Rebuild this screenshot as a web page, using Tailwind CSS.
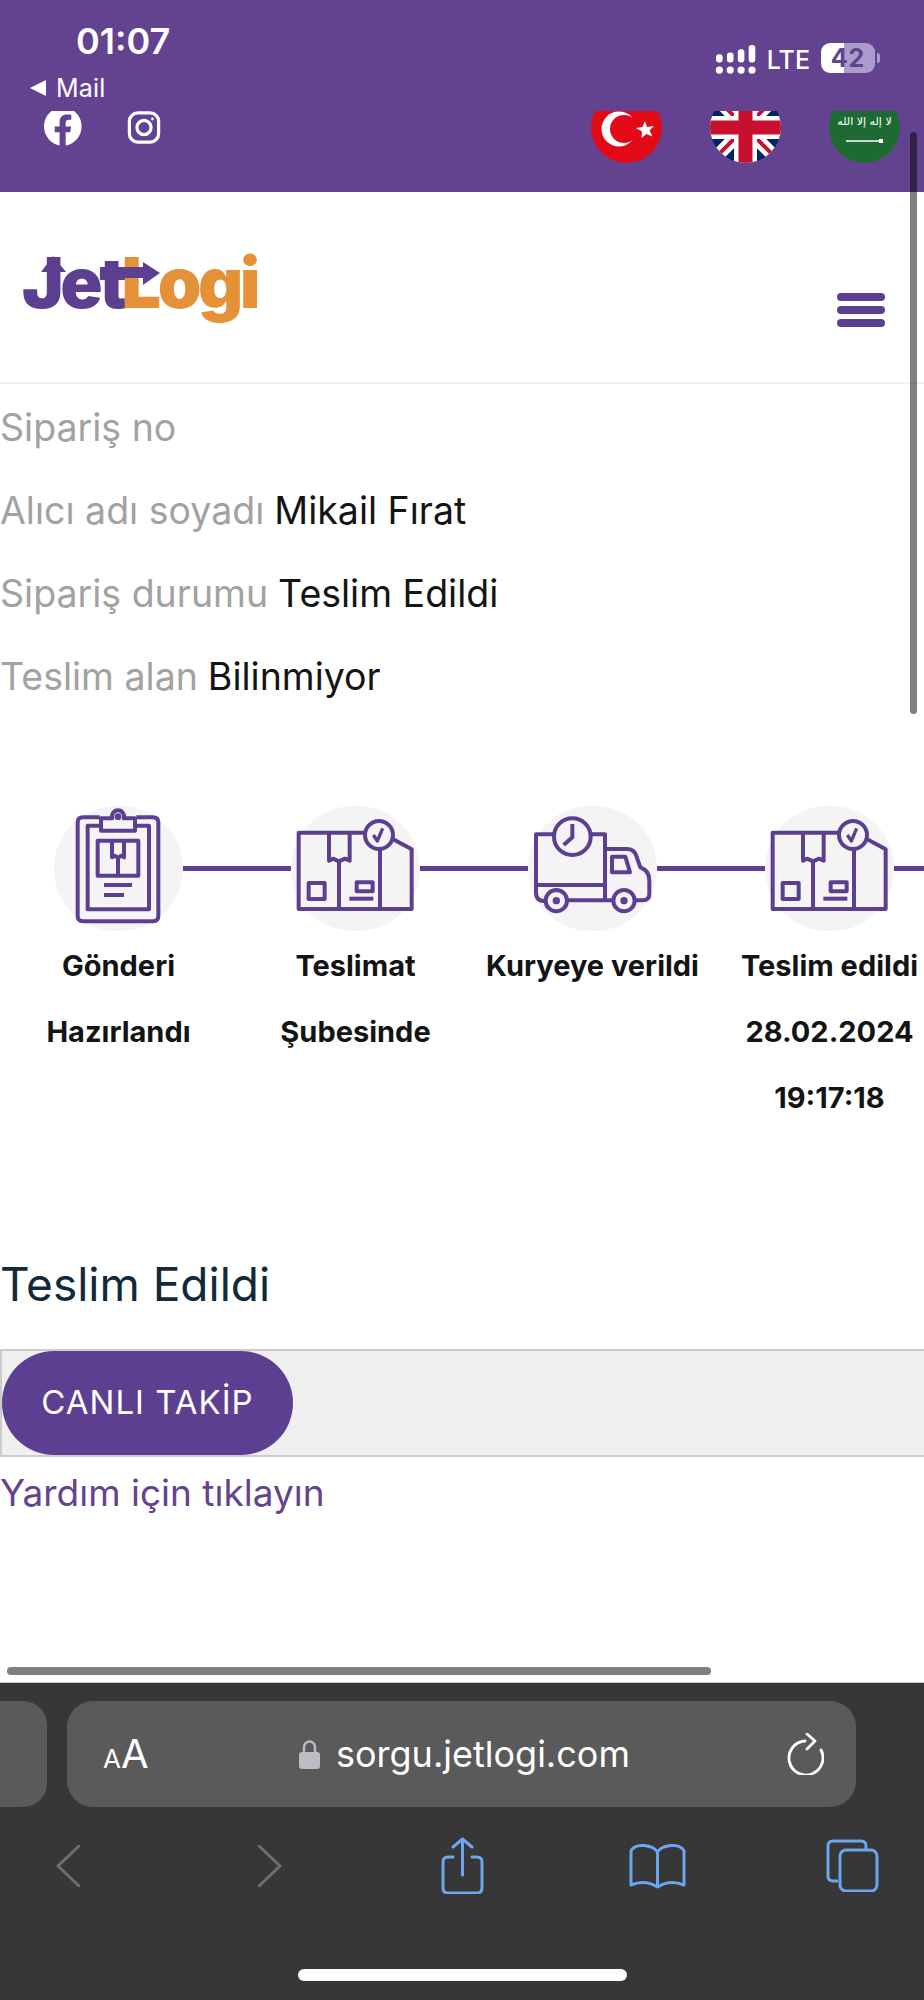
<!DOCTYPE html>
<html lang="tr">
  <head>
    <meta charset="UTF-8" />
    <meta name="viewport" content="width=device-width, initial-scale=1.0" />
    <title>JetLogi Sipariş Sorgu</title>
    <script src="https://cdn.jsdelivr.net/npm/@tailwindcss/browser@4"></script>
  </head>
  <body class="bg-white [font-family:Inter,sans-serif]">
    <div class="relative flex h-[2000px] w-[924px] flex-col overflow-hidden">
      <!-- Purple top bar, with the phone status bar on top of it -->
      <header class="h-[192px] shrink-0 bg-[#63438f] text-white">
        <div class="flex h-[111px] justify-between">
          <div class="pl-[30px]">
            <div class="pl-[46px] pt-[20px] text-[36px] leading-[42px] font-semibold">01:07</div>
            <div class="mt-[12px] flex h-[28px] items-center gap-[9px]">
              <svg width="17" height="18" viewBox="0 0 17 16"><path d="M0 8 16 0V16Z" fill="#fff" /></svg>
              <span class="text-[25px] leading-none tracking-[0.2px]">Mail</span>
            </div>
          </div>
          <div class="flex items-start pr-[44px] pt-[43px]">
            <svg class="mt-[2px]" width="41" height="29" viewBox="468 72 122 88" fill="#fff">
              <rect x="470" y="100" width="20" height="25" rx="9" /><rect x="503" y="95" width="20" height="30" rx="9" /><rect x="536" y="85" width="20" height="40" rx="9" /><rect x="569" y="72" width="20" height="53" rx="9" />
              <circle cx="480" cy="148" r="11" /><circle cx="513" cy="148" r="11" /><circle cx="546" cy="148" r="11" /><circle cx="579" cy="148" r="11" />
            </svg>
            <span class="ml-[11px] mt-[2px] text-[25px] leading-[30px] font-medium">LTE</span>
            <div class="ml-[11px] flex h-[30px] w-[54px] items-center justify-center rounded-[9px] bg-[linear-gradient(90deg,#fff_42%,#ae9bcd_42%)] text-[25px] leading-none font-bold tracking-[1px] text-[#5d4590]">42</div>
            <div class="ml-[2px] mt-[10px] h-[10px] w-[3px] rounded-r-full bg-[#ae9bcd]"></div>
          </div>
        </div>
        <div class="flex h-[52px] items-start justify-between pr-[24px]">
          <div class="flex pl-[44px]">
            <!-- the facebook disc is cut off at the top like the flags -->
            <div class="h-[35px] w-[39px] overflow-hidden">
              <svg class="-mt-[4px]" width="39" height="39" viewBox="0 0 40 40">
                <path fill="#fff" d="M20 0a20 20 0 0 0-4 39.600V26h-5v-6h5v-4.500C16 10.500 19 7.800 23.500 7.800c2.200 0 4.500.4 4.500.4v5h-2.500c-2.500 0-3.300 1.500-3.300 3.100V20h5.600l-.9 6h-4.700v13.600A20 20 0 0 0 20 0Z" />
              </svg>
            </div>
            <svg class="ml-[44px]" width="34" height="33" viewBox="0 0 35 35" fill="none" stroke="#fff" stroke-width="3.400">
              <rect x="2" y="2" width="31" height="31" rx="9" /><circle cx="17.500" cy="17.500" r="7.500" /><circle cx="26.500" cy="8.500" r="1.500" fill="#fff" stroke="none" />
            </svg>
          </div>
          <div class="flex gap-[48px]">
            <!-- flags: round images cut off at the top -->
            <div class="h-[52px] w-[71px] overflow-hidden">
              <svg class="-mt-[19px]" width="71" height="71" viewBox="0 0 71 71">
                <circle cx="35.500" cy="35.500" r="35.500" fill="#e30a17" />
                <circle cx="28" cy="37" r="17.500" fill="#fff" /><circle cx="33" cy="37" r="14" fill="#e30a17" />
                <path fill="#fff" d="m54 29 2 6 7-1-4.500 4.500 3 6-6-2.500-5 4 .5-6.500L45 36l6.500-1Z" />
              </svg>
            </div>
            <div class="h-[52px] w-[71px] overflow-hidden">
              <svg class="-mt-[19px]" width="71" height="71" viewBox="0 0 71 71">
                <defs><clipPath id="ukClip"><circle cx="35.500" cy="35.500" r="35.500" /></clipPath></defs>
                <g clip-path="url(#ukClip)">
                  <rect width="71" height="71" fill="#012169" />
                  <path d="M0 0 71 71M71 0 0 71" stroke="#fff" stroke-width="13" />
                  <path d="M0 0 71 71M71 0 0 71" stroke="#c8102e" stroke-width="4" />
                  <path d="M35.500 0V71M0 35.500H71" stroke="#fff" stroke-width="23" />
                  <path d="M35.500 0V71M0 35.500H71" stroke="#c8102e" stroke-width="14" />
                </g>
              </svg>
            </div>
            <div class="h-[52px] w-[71px] overflow-hidden">
              <svg class="-mt-[19px]" width="71" height="71" viewBox="0 0 71 71">
                <circle cx="35.500" cy="35.500" r="35.500" fill="#1d6b33" />
                <text x="35.500" y="33" text-anchor="middle" font-size="11" fill="#fff" font-family="DejaVu Sans, sans-serif">لا إله إلا الله</text>
                <path d="M17 49H52" stroke="#fff" stroke-width="1.500" /><path d="M50 47h4v4h-4z" fill="#fff" />
              </svg>
            </div>
          </div>
        </div>
      </header>

      <!-- Logo and menu -->
      <nav class="flex h-[192px] shrink-0 items-start justify-between border-b-2 border-[#f0f0f0]">
        <div class="relative ml-[22px] mt-[53px] flex text-[70px] leading-[76px] font-black tracking-[-3.500px]">
          <span class="text-[#5d3f91]">Jet</span><span class="-ml-[2px] text-[#e59137]">Logi</span>
          <svg class="absolute left-0 top-0" width="140" height="44" viewBox="0 0 140 44" fill="#5d3f91">
            <path d="M31 11 44 27h-6v6H25v-6h-6Z" />
            <path d="M78 22h43v-5l17 11-17 12v-7H78Z" />
          </svg>
        </div>
        <div class="mr-[39px] mt-[101px] flex w-[48px] flex-col gap-[5px]">
          <div class="h-[8px] rounded-full bg-[#5d3f91]"></div>
          <div class="h-[8px] rounded-full bg-[#5d3f91]"></div>
          <div class="h-[8px] rounded-full bg-[#5d3f91]"></div>
        </div>
      </nav>

      <!-- Order details -->
      <section class="pt-[3px] text-[37.500px] text-[#a2a2a2]">
        <div class="flex h-[83px] items-center">Sipariş no</div>
        <div class="flex h-[83px] items-center gap-[10px]">Alıcı adı soyadı <span class="text-[#141414]">Mikail Fırat</span></div>
        <div class="flex h-[83px] items-center gap-[10px]">Sipariş durumu <span class="text-[#141414]">Teslim Edildi</span></div>
        <div class="flex h-[83px] items-center gap-[10px]">Teslim alan <span class="text-[#141414]">Bilinmiyor</span></div>
      </section>

      <!-- Stepper -->
      <section class="mt-[87px] flex h-[324px] shrink-0 text-center text-[29px] leading-[66px] font-bold text-[#141414]">
        <div class="w-[237px] shrink-0">
          <div class="flex items-center">
            <div class="h-[5px] flex-1"></div>
            <div class="h-[125px] w-[129px] rounded-full bg-[#f4f4f4]">
              <svg width="129" height="125" viewBox="163 78 387 375" fill="none" stroke="#5d3f91" stroke-width="12" stroke-linejoin="round">
                <path d="M300 112h-50q-16 0-16 16v280q0 16 16 16h210q16 0 16-16V128q0-16-16-16h-50" />
                <path d="M300 137h-36v251h184V137h-38" />
                <path d="M304 115h34a18 18 0 1 1 34 0h34v37H304Z" />
                <circle cx="355" cy="110" r="4" fill="#5d3f91" />
                <rect x="294" y="182" width="122" height="105" />
                <path d="M337 182v50l8-5 10 6 10-6 8 5v-50M355 233v54M313 315h84M313 345h60" />
              </svg>
            </div>
            <div class="h-[5px] flex-1 bg-[#5d3f91]"></div>
          </div>
          <div class="mt-[2px]">Gönderi<br />Hazırlandı</div>
        </div>
        <div class="w-[237px] shrink-0">
          <div class="flex items-center">
            <div class="h-[5px] flex-1 bg-[#5d3f91]"></div>
            <div class="h-[125px] w-[129px] rounded-full bg-[#f4f4f4]">
              <svg width="129" height="125" viewBox="873 78 387 375" fill="none" stroke="#5d3f91" stroke-width="12" stroke-linejoin="round">
                <path d="M1095 158H896v229h339V208l-58-32" />
                <path d="M987 158v84l12-6 18 8 18-8 14 6v-84M1017 244v143M1140 208v179" />
                <circle cx="1137" cy="165" r="42" />
                <path d="M1120 165l12 18 16-38" stroke-width="10" />
                <rect x="926" y="309" width="48" height="48" />
                <rect x="1070" y="307" width="48" height="27" />
                <path d="M1048 356h72" />
              </svg>
            </div>
            <div class="h-[5px] flex-1 bg-[#5d3f91]"></div>
          </div>
          <div class="mt-[2px]">Teslimat<br />Şubesinde</div>
        </div>
        <div class="w-[237px] shrink-0">
          <div class="flex items-center">
            <div class="h-[5px] flex-1 bg-[#5d3f91]"></div>
            <div class="h-[125px] w-[129px] rounded-full bg-[#f4f4f4]">
              <svg width="129" height="125" viewBox="198 78 387 375" fill="none" stroke="#5d3f91" stroke-width="12" stroke-linejoin="round">
                <path d="M276 163h-54v175q0 25 28 25M385 163h44v198M222 315h207M315 361h135" />
                <circle cx="331" cy="170" r="55" />
                <path d="M331 132v40l-26 23" />
                <path d="M430 207h65q20 0 27 18l13 37q27 10 27 38v42q0 19-20 19h-23" />
                <path d="M450 230h40l14 47h-54Z" />
                <circle cx="283" cy="362" r="32" /><circle cx="283" cy="362" r="5" fill="#5d3f91" />
                <circle cx="486" cy="362" r="32" /><circle cx="486" cy="362" r="5" fill="#5d3f91" />
              </svg>
            </div>
            <div class="h-[5px] flex-1 bg-[#5d3f91]"></div>
          </div>
          <div class="mt-[2px] whitespace-nowrap">Kuryeye verildi</div>
        </div>
        <div class="w-[237px] shrink-0">
          <div class="flex items-center">
            <div class="h-[5px] flex-1 bg-[#5d3f91]"></div>
            <div class="h-[125px] w-[129px] rounded-full bg-[#f4f4f4]">
              <svg width="129" height="125" viewBox="873 78 387 375" fill="none" stroke="#5d3f91" stroke-width="12" stroke-linejoin="round">
                <path d="M1095 158H896v229h339V208l-58-32" />
                <path d="M987 158v84l12-6 18 8 18-8 14 6v-84M1017 244v143M1140 208v179" />
                <circle cx="1137" cy="165" r="42" />
                <path d="M1120 165l12 18 16-38" stroke-width="10" />
                <rect x="926" y="309" width="48" height="48" />
                <rect x="1070" y="307" width="48" height="27" />
                <path d="M1048 356h72" />
              </svg>
            </div>
            <div class="h-[5px] flex-1 bg-[#5d3f91]"></div>
          </div>
          <div class="mt-[2px] whitespace-nowrap">Teslim edildi<br />28.02.2024<br />19:17:18</div>
        </div>
      </section>

      <h1 class="mt-[124px] h-[61px] shrink-0 text-[46px] leading-[61px] text-[#10293b]">Teslim Edildi</h1>

      <!-- Live tracking -->
      <div class="mt-[34px] h-[108px] shrink-0 border-y-2 border-l-2 border-[#cccccc] bg-[#efefef]">
        <button class="h-[104px] w-[291px] rounded-full bg-[#5d3f91] text-[33px] tracking-[1px] text-white">CANLI TAKİP</button>
      </div>
      <a class="flex h-[71px] shrink-0 items-center text-[37px] text-[#63438f]">Yardım için tıklayın</a>

      <div class="flex-1"></div>

      <!-- Safari bottom bar -->
      <footer class="h-[318px] shrink-0 border-t border-[#c4c4c4] bg-[#373737] pt-[18px]">
        <div class="flex gap-[20px]">
          <div class="h-[106px] w-[47px] rounded-r-[24px] bg-[#5a5a5a]"></div>
          <div class="flex h-[106px] w-[789px] items-center rounded-[26px] bg-[#5a5a5a] pl-[36px] pr-[32px] text-white">
            <span class="w-[46px] text-[40px] leading-none whitespace-nowrap"><span class="text-[26px]">A</span>A</span>
            <div class="ml-[150px] flex items-center gap-[16px]">
              <svg width="21" height="29" viewBox="0 0 21 29">
                <path d="M5 13V7a5.500 5.500 0 0 1 11 0v6" fill="none" stroke="#bcbcc2" stroke-width="2.500" /><rect y="12" width="21" height="17" rx="3" fill="#bcbcc2" />
              </svg>
              <span class="text-[36px] leading-none">sorgu.jetlogi.com</span>
            </div>
            <svg class="ml-auto" width="37" height="42" viewBox="0 0 37 42" fill="none" stroke="#fff" stroke-width="2.800" stroke-linecap="round" stroke-linejoin="round">
              <path d="M18 8A17 17 0 1 0 34 17" /><path d="M20 1l8 7-8 8" />
            </svg>
          </div>
        </div>
        <div class="mt-[30px] flex h-[57px] items-center pl-[56px]">
          <svg width="24" height="42" viewBox="0 0 24 42" fill="none" stroke="#6e6e6e" stroke-width="3" stroke-linecap="round" stroke-linejoin="round"><path d="M23 1 2 21l21 20" /></svg>
          <svg class="ml-[178px]" width="24" height="42" viewBox="0 0 24 42" fill="none" stroke="#6e6e6e" stroke-width="3" stroke-linecap="round" stroke-linejoin="round"><path d="M1 1l21 20L1 41" /></svg>
          <svg class="ml-[159px]" width="43" height="57" viewBox="0 0 43 57" fill="none" stroke="#6da5ee" stroke-width="3" stroke-linecap="round" stroke-linejoin="round">
            <path d="M12 20H7q-5 0-5 5v26q0 5 5 5h29q5 0 5-5V25q0-5-5-5h-5M21.500 38V2M12 10l9.500-8L31 10" />
          </svg>
          <svg class="ml-[145px]" width="57" height="46" viewBox="0 0 57 46" fill="none" stroke="#6da5ee" stroke-width="3" stroke-linecap="round" stroke-linejoin="round">
            <path d="M28.500 9C24 2 6 -1 2 8v34q14-6 26.500 2Q41 36 55 42V8c-4-9-22-6-26.500 1Zm0 0v35" />
          </svg>
          <svg class="ml-[140px]" width="53" height="53" viewBox="0 0 53 53" fill="none" stroke="#6da5ee" stroke-width="3" stroke-linejoin="round">
            <path d="M12 42H7q-5 0-5-5V7q0-5 5-5h28q5 0 5 5v4" />
            <rect x="14" y="11" width="37" height="41" rx="6" />
          </svg>
        </div>
        <div class="mx-auto mt-[75px] h-[12px] w-[329px] rounded-full bg-white"></div>
      </footer>

      <!-- Overlay scrollbars of the page -->
      <div class="absolute left-[910px] top-[132px] h-[582px] w-[7px] rounded-full bg-black/50"></div>
      <div class="absolute left-[7px] top-[1667px] h-[8px] w-[704px] rounded-full bg-black/50"></div>
    </div>
  </body>
</html>
